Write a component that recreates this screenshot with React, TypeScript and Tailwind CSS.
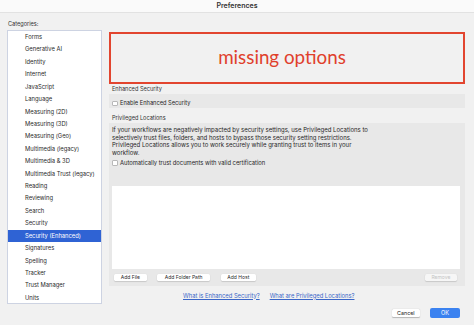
import React from "react";

const categories = [
  "Forms",
  "Generative AI",
  "Identity",
  "Internet",
  "JavaScript",
  "Language",
  "Measuring (2D)",
  "Measuring (3D)",
  "Measuring (Geo)",
  "Multimedia (legacy)",
  "Multimedia & 3D",
  "Multimedia Trust (legacy)",
  "Reading",
  "Reviewing",
  "Search",
  "Security",
  "Security (Enhanced)",
  "Signatures",
  "Spelling",
  "Tracker",
  "Trust Manager",
  "Units",
];

function Check() {
  return (
    <span className="inline-block w-[5.5px] h-[5.5px] bg-white border-[0.5px] border-[#b9b9b9] rounded-[1px] mr-[2.5px] shrink-0" />
  );
}

function Btn({ label, w, disabled }: { label: string; w: string; disabled?: boolean }) {
  return (
    <div
      className={
        "h-[7px] flex items-center justify-center rounded-[1.5px] text-[5px] leading-[7px] shadow-[0_0.5px_1px_rgba(0,0,0,0.25)] " +
        w +
        (disabled ? " bg-[#f6f6f6] text-[#c4c4c4]" : " bg-white text-[#2a2a2a]")
      }
    >
      {label}
    </div>
  );
}

export default function App() {
  return (
    <div
      className="w-[474px] h-[325px] bg-[#f1f1f1] text-[#262626] overflow-hidden flex flex-col"
      style={{ fontFamily: "Inter, 'Noto Sans', sans-serif" }}
    >
      <div className="h-[13px] shrink-0 bg-[#fafafa] border-b border-[#e2e2e2] flex items-center justify-center text-[7px] font-semibold text-[#333]">
        Preferences
      </div>
      <div className="flex flex-row pl-[7px]">
        <div className="w-[95px] flex flex-col">
          <div className="mt-[7px] h-[8px] leading-[8px] text-[5.6px] pl-[1px] text-[#333]">Categories:</div>
          <div className="mt-[2px] h-[274px] bg-white border border-[#cdd3e2] flex flex-col">
            {categories.map((c) => {
              const sel = c === "Security (Enhanced)";
              return (
                <div
                  key={c}
                  className={
                    "h-[12.43px] leading-[12.43px] text-[5.8px] pl-[17px] whitespace-nowrap " +
                    (sel ? "bg-[#2f63d4] text-white" : "text-[#2a2a2a]")
                  }
                >
                  {c}
                </div>
              );
            })}
          </div>
        </div>
        <div className="ml-[7px] w-[356px] flex flex-col">
          <div
            className="mt-[19px] h-[52px] border-2 border-[#e2452f] flex items-center justify-center text-[18.8px] text-[#e0402c] pb-[1px] pr-[10px]"
            style={{ fontFamily: "Lato, 'Open Sans', sans-serif" }}
          >
            missing options
          </div>
          <div className="mt-[1px] h-[9px] leading-[9px] text-[5.6px] pl-[3px] text-[#333]">Enhanced Security</div>
          <div className="h-[14px] bg-[#e8e8e8] pl-[3px] pt-[6px]">
            <div className="h-[7px] flex items-center text-[5.7px]">
              <Check />
              <span>Enable Enhanced Security</span>
            </div>
          </div>
          <div className="mt-[6px] h-[9px] leading-[9px] text-[5.6px] pl-[3px] text-[#333]">Privileged Locations</div>
          <div className="h-[163px] bg-[#e8e8e8] flex flex-col">
            <div className="pt-[3.3px] pl-[3px] text-[6px] leading-[7.4px] whitespace-nowrap">
              If your workflows are negatively impacted by security settings, use Privileged Locations to
              <br />
              selectively trust files, folders, and hosts to bypass those security setting restrictions.
              <br />
              Privileged Locations allows you to work securely while granting trust to items in your
              <br />
              workflow.
            </div>
            <div className="mt-[3.6px] h-[7px] pl-[3px] flex items-center text-[5.8px]">
              <Check />
              <span>Automatically trust documents with valid certification</span>
            </div>
            <div className="mt-[19.5px] ml-[3px] w-[348px] h-[83px] bg-white" />
            <div className="mt-[4.8px] flex flex-row items-center pl-[5px] pr-[8.3px]">
              <Btn label="Add File" w="w-[32.7px]" />
              <div className="ml-[10.6px]">
                <Btn label="Add Folder Path" w="w-[52.7px]" />
              </div>
              <div className="ml-[10.7px]">
                <Btn label="Add Host" w="w-[35.3px]" />
              </div>
              <div className="ml-auto">
                <Btn label="Remove" w="w-[31.7px]" disabled />
              </div>
            </div>
          </div>
          <div className="mt-[6px] h-[8px] flex flex-row items-center pl-[74px] gap-[10px] text-[5.8px] text-[#3a66c8] underline">
            <span>What is Enhanced Security?</span>
            <span>What are Privileged Locations?</span>
          </div>
          <div className="mt-[7.5px] h-[11px] flex flex-row items-center justify-end pr-[5px]">
            <div className="w-[28.3px] h-[8px] bg-white rounded-[1.5px] shadow-[0_0.5px_1px_rgba(0,0,0,0.25)] flex items-center justify-center text-[5.4px]">
              Cancel
            </div>
            <div className="ml-[10px] w-[30px] h-[10px] bg-[#3b82f0] rounded-[2px] flex items-center justify-center text-[5.6px] text-white">
              OK
            </div>
          </div>
        </div>
      </div>
    </div>
  );
}
